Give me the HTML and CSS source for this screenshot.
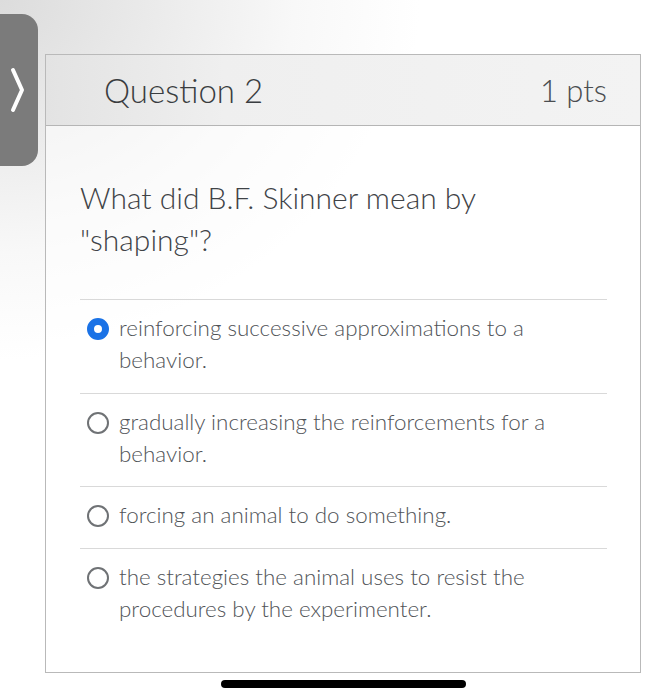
FILE: index.html
```html
<!DOCTYPE html>
<html>
<head>
<meta charset="utf-8">
<link rel="stylesheet" href="styles.css">
</head>
<body>
<div class="page">
  <div class="side-tab">
    <svg class="chevron" width="18" height="48" viewBox="0 0 18 48">
      <path d="M5 4 L14 24 L5 44" fill="none" stroke="#fff" stroke-width="4" stroke-linecap="round" stroke-linejoin="round"/>
    </svg>
  </div>
  <div class="card">
    <div class="card-header">
      <span class="q-title">Question 2</span>
      <span class="q-pts">1 pts</span>
    </div>
    <div class="card-body">
      <p class="q-text">What did B.F. Skinner mean by "shaping"?</p>
      <ul class="answers">
        <li class="answer"><span class="radio selected"></span><span class="answer-text">reinforcing successive approximations to a behavior.</span></li>
        <li class="answer"><span class="radio"></span><span class="answer-text">gradually increasing the reinforcements for a behavior.</span></li>
        <li class="answer"><span class="radio"></span><span class="answer-text">forcing an animal to do something.</span></li>
        <li class="answer"><span class="radio"></span><span class="answer-text">the strategies the animal uses to resist the procedures by the experimenter.</span></li>
      </ul>
    </div>
  </div>
  <div class="home-bar"></div>
</div>
</body>
</html>
```
FILE: styles.css
```css
html, body {
  margin: 0;
  padding: 0;
}
body {
  width: 656px;
  height: 700px;
  overflow: hidden;
  font-family: Lato, "Noto Sans", sans-serif;
  font-weight: 300;
  background: #fff;
}
.page {
  position: relative;
  width: 656px;
  height: 700px;
  padding-top: 54px;
  box-sizing: border-box;
  background: radial-gradient(ellipse 420px 360px at 0 0, #dcdcdc 0%, #ececec 40%, #f8f8f8 70%, #ffffff 100%);
}
.side-tab {
  position: absolute;
  left: -20px;
  top: 14px;
  width: 58px;
  height: 152px;
  background: #7b7b7b;
  border-radius: 16px;
  display: flex;
  align-items: center;
  justify-content: flex-end;
}
.chevron {
  margin-right: 12px;
  margin-top: -1px;
}
.card {
  margin-left: 45px;
  width: 596px;
  box-sizing: border-box;
  border: 1.5px solid #b9b9b9;
  background: rgba(255,255,255,0.55);
}
.card-header {
  height: 71px;
  box-sizing: border-box;
  display: flex;
  align-items: center;
  justify-content: space-between;
  padding: 0 33px 0 58px;
  background: linear-gradient(to right, #e3e3e3 0%, #efefef 30%, #f3f3f3 100%);
  border-bottom: 1.5px solid #b5b5b5;
  color: #3a3d40;
}
.q-title {
  font-size: 33px;
}
.q-pts {
  font-size: 31px;
  color: #4a4d50;
}
.card-body {
  padding: 50px 33px 47px 34px;
}
.q-text {
  margin: 0 0 39px 0;
  padding-right: 20px;
  font-size: 30px;
  line-height: 42px;
  color: #3f4347;
}
.answers {
  list-style: none;
  margin: 0;
  padding: 0;
}
.answer {
  display: flex;
  align-items: flex-start;
  padding: 12px 0 16.5px 7px;
  border-top: 1px solid #d9d9d9;
  font-size: 22.4px;
  line-height: 32px;
  color: #505357;
}
.answer:last-child {
  padding-bottom: 0;
}
.radio {
  flex: none;
  width: 22px;
  height: 22px;
  box-sizing: border-box;
  border: 2px solid #6f7275;
  border-radius: 50%;
  margin: 6px 10px 0 0;
  background: #fff;
}
.radio.selected {
  border: 7px solid #1a72e6;
  background: #fff;
}
.home-bar {
  width: 245px;
  height: 8px;
  border-radius: 4px;
  background: #000;
  margin: 7px 0 0 221px;
}
```
